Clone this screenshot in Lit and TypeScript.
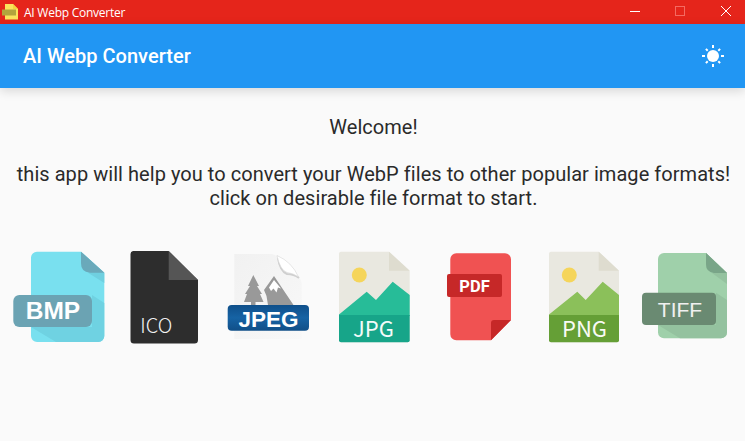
import { LitElement, html, css, svg } from "lit";
import { customElement } from "lit/decorators.js";

const fmtText = (x: number, y: number, size: number, fill: string, family: string, weight: number, label: string) =>
  svg`<text x=${x} y=${y} text-anchor="middle" font-size=${size} fill=${fill} font-family=${family} font-weight=${weight}>${label}</text>`;

const LS = "Liberation Sans, sans-serif";
const NS = "Noto Sans CJK SC, sans-serif";
const RB = "Roboto, sans-serif";

const icons = [
  {
    name: "BMP",
    body: svg`
      <path d="M37 251.7H81L104.3 272.7V336a6 6 0 0 1-6 6H37a6 6 0 0 1-6-6V257.7a6 6 0 0 1 6-6Z" fill="#79e0ef"/>
      <path d="M31 327H92V295L104.3 303V336a6 6 0 0 1-6 6H56Z" fill="#6fd2e2"/>
      <path d="M81 251.7L104.3 272.7V283L88 272.7H90Q81 272 81 263Z" fill="#6fd0e0"/>
      <path d="M81 251.7L104.3 272.7H90Q81 272 81 263Z" fill="#6aa9ba"/>
      <rect x="13.3" y="295" width="78.7" height="32" rx="6" fill="#6ba3b3"/>
      ${fmtText(53, 319, 24.5, "#fff", LS, 700, "BMP")}`,
  },
  {
    name: "ICO",
    body: svg`
      <path d="M133 251H168.7L198 280V340a3.5 3.5 0 0 1-3.5 3.5H134a3.5 3.5 0 0 1-3.5-3.5V254a3 3 0 0 1 2.500-3Z" fill="#2d2d2d"/>
      <path d="M168.700 251L198 280H168.700Z" fill="#555"/>
      ${fmtText(156.200, 333, 20, "#f4f4f4", NS, 300, "ICO")}`,
  },
  {
    name: "JPEG",
    body: svg`
      <defs>
        <linearGradient id="paper" x1="0" y1="0" x2="1" y2="1">
          <stop offset="0" stop-color="#f1f1f1"/>
          <stop offset="1" stop-color="#f8f8f8"/>
        </linearGradient>
        <linearGradient id="badge" x1="0" y1="0" x2="0" y2="1">
          <stop offset="0" stop-color="#0f4f8a"/>
          <stop offset=".5" stop-color="#1663a4"/>
          <stop offset="1" stop-color="#114f88"/>
        </linearGradient>
      </defs>
      <path d="M234.300 254H272Q285 258 292 268Q300 276 301.700 283V339H234.300Z" fill="url(#paper)"/>
      <path d="M278 258Q280 271 287 274Q294 274 299 278" fill="none" stroke="#cfcfcf" stroke-width="2"/>
      <path d="M277 255.500Q280 270 287 272.500Q293 273 298.500 277Q292 262 277 255.500Z" fill="#fff" stroke="#d6d6d6" stroke-width=".6"/>
      <path d="M253.300 275L259 286H257L262 294H260L263.500 302H255.500V305H251V302H244L247 294H245L250 286H248Z" fill="#999"/>
      <path d="M274 276L293.500 305H268L266.500 296L264 290Z" fill="#999"/>
      <path d="M274 280L281 288.500L278 287.500L276.500 292.500L273.500 288.500L271 291L269 287.500Z" fill="#fff"/>
      <rect x="227.700" y="305" width="81.300" height="25.700" rx="4" fill="url(#badge)"/>
      ${fmtText(268.500, 326.700, 22.500, "#fff", LS, 700, "JPEG")}`,
  },
  {
    name: "JPG",
    body: svg`
      <path d="M341 251.700H389L409.700 270.700V340.300a2 2 0 0 1-2 2H341a2 2 0 0 1-2-2V253.700a2 2 0 0 1 2-2Z" fill="#e9e8e0"/>
      <path d="M389 251.700L409.700 270.700H389Z" fill="#dedccf"/>
      <circle cx="359.300" cy="275" r="7.500" fill="#f5d55b"/>
      <path d="M339 314.500L366.700 291.700L376 300L392.700 281.700L409.700 295V316H339Z" fill="#27bc98"/>
      <path d="M339 315H409.700V340.300a2 2 0 0 1-2 2H341a2 2 0 0 1-2-2Z" fill="#17a589"/>
      ${fmtText(373.500, 337, 22, "#f4fbf9", NS, 400, "JPG")}`,
  },
  {
    name: "PDF",
    body: svg`
      <path d="M456.300 253.300H505a6 6 0 0 1 6 6V320L491 340.300H456.300a6 6 0 0 1-6-6V259.300a6 6 0 0 1 6-6Z" fill="#f05252"/>
      <path d="M511 320H494a3 3 0 0 0-3 3V340.300Z" fill="#c62828"/>
      <rect x="447" y="274" width="55" height="23" rx="2" fill="#c62828"/>
      ${fmtText(474.500, 291.500, 16.500, "#fff", RB, 700, "PDF")}`,
  },
  {
    name: "PNG",
    body: svg`
      <path d="M551 251.700H598.700L619 270.700V340.300a2 2 0 0 1-2 2H551a2 2 0 0 1-2-2V253.700a2 2 0 0 1 2-2Z" fill="#e9e8e0"/>
      <path d="M598.700 251.700L619 270.700H598.700Z" fill="#dedccf"/>
      <circle cx="569.300" cy="275" r="7.500" fill="#f5d55b"/>
      <path d="M549 314.500L577.300 291.700L585.700 300L602.700 281.700L619 295V316H549Z" fill="#8bc05a"/>
      <path d="M549 315H619V340.300a2 2 0 0 1-2 2H551a2 2 0 0 1-2-2Z" fill="#659f36"/>
      ${fmtText(584.500, 337, 22, "#f8faf4", NS, 400, "PNG")}`,
  },
  {
    name: "TIFF",
    body: svg`
      <path d="M664 253H706L727 273V332.300a6 6 0 0 1-6 6H664a6 6 0 0 1-6-6V259a6 6 0 0 1 6-6Z" fill="#9fd0aa"/>
      <path d="M658 325H716V292.700L727 300V332.300a6 6 0 0 1-6 6H680Z" fill="#94c29f"/>
      <path d="M706 253L727 273V284L712 273H714Q706 272 706 264Z" fill="#94c29f"/>
      <path d="M706 253L727 273H714Q706 272 706 264Z" fill="#79a588"/>
      <rect x="642" y="292.700" width="74" height="32.300" rx="4" fill="#6a8a72"/>
      ${fmtText(680, 316.700, 21, "#f0f0f0", LS, 400, "TIFF")}`,
  },
];

@customElement("app-root")
export class AppRoot extends LitElement {
  static styles = css`
    :host {
      display: flex;
      flex-direction: column;
      height: 100vh;
      overflow: hidden;
      background: #fafafa;
      font-family: Roboto, sans-serif;
      color: #2a2a2a;
    }
    .titlebar {
      height: 24px;
      flex: none;
      display: flex;
      align-items: center;
      background: #e5251b;
      color: #fff;
      font-family: "Open Sans", sans-serif;
      font-size: 12px;
      letter-spacing: -0.25px;
    }
    .app-icon {
      width: 16px;
      height: 16px;
      margin: 0 6px 0 2px;
    }
    .title-text {
      flex: 1;
    }
    .win {
      width: 46px;
      height: 24px;
      display: block;
    }
    .appbar {
      height: 64px;
      flex: none;
      display: flex;
      align-items: center;
      justify-content: space-between;
      padding: 0 20px 0 23px;
      background: #2196f3;
      color: #fff;
      font-size: 20px;
      font-weight: 500;
      letter-spacing: 0.02px;
      box-shadow: 0 3px 10px rgba(0, 0, 0, 0.14);
      position: relative;
    }
    .sun {
      width: 24px;
      height: 24px;
      display: block;
    }
    .intro {
      margin: 0;
      padding: 28px 0 0 2px;
      text-align: center;
      font-size: 20px;
      line-height: 23.5px;
      letter-spacing: 0.05px;
    }
    .intro p {
      margin: 0;
    }
    .blank {
      height: 23.5px;
    }
    .formats {
      display: flex;
      padding: 36.6px 0 0 8px;
    }
    .formats svg {
      width: 104px;
      height: 100px;
      display: block;
      flex: none;
    }
  `;

  render() {
    return html`
      <div class="titlebar">
        <svg class="app-icon" viewBox="0 0 16 16">
          <path d="M3 0H11L16 5V15.500H3Z" fill="#fbe35c"/>
          <path d="M11 0L16 5H11Z" fill="#f4d43f"/>
          <rect x="0" y="5.500" width="14" height="6" fill="#b3a43c"/>
        </svg>
        <span class="title-text">AI Webp Converter</span>
        <svg class="win" viewBox="0 0 46 24"><path d="M23 11.500H33" stroke="#fff" fill="none"/></svg>
        <svg class="win" viewBox="0 0 46 24"><rect x="22.500" y="6.500" width="9" height="9" stroke="#f46a62" fill="none"/></svg>
        <svg class="win" viewBox="0 0 46 24"><path d="M22 6L32 16M32 6L22 16" stroke="#fff" fill="none"/></svg>
      </div>
      <header class="appbar">
        <span>AI Webp Converter</span>
        <svg class="sun" viewBox="0 0 24 24" fill="#fff">
          <circle cx="12" cy="12" r="6"/>
          <rect x="11" y="1" width="2" height="3"/>
          <rect x="11" y="20" width="2" height="3"/>
          <rect x="1" y="11" width="3" height="2"/>
          <rect x="20" y="11" width="3" height="2"/>
          <path d="M4.200 5.600L5.600 4.200L7.400 6L6 7.400ZM18.400 19.800L19.800 18.400L18 16.600L16.600 18ZM4.200 18.400L5.600 19.800L7.400 18L6 16.600ZM18.400 4.200L19.800 5.600L18 7.400L16.600 6Z"/>
        </svg>
      </header>
      <section class="intro">
        <p>Welcome!</p>
        <div class="blank"></div>
        <p>this app will help you to convert your WebP files to other popular image formats!</p>
        <p>click on desirable file format to start.</p>
      </section>
      <section class="formats">
        ${icons.map(
          (ic, i) => html`<svg role="img" aria-label=${ic.name} viewBox="${8 + 104 * i} 247 104 100">${ic.body}</svg>`
        )}
      </section>
    `;
  }
}
